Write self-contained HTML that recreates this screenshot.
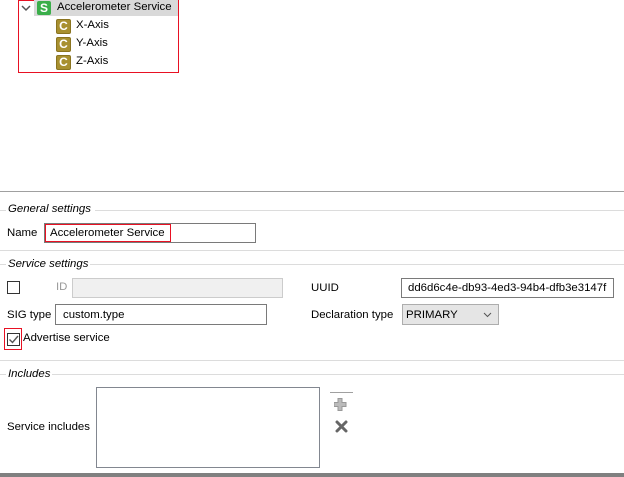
<!DOCTYPE html>
<html><head><style>
body{margin:0;width:624px;height:477px;background:#fff;position:relative;overflow:hidden;font-family:"Liberation Sans",sans-serif;font-size:11.4px;color:#000}
.a{position:absolute;white-space:nowrap}
.ln{position:absolute;height:1px;background:#dcdcdc}
.in{position:absolute;border:1px solid #7a7a7a;background:#fff;box-sizing:border-box;padding:2px 0 0 7px;font-size:11.4px;line-height:14px;white-space:nowrap}
.ic{position:absolute;width:14px;height:14px;border-radius:2px;color:#fff;font-weight:bold;font-size:12px;line-height:14px;text-align:center}
i{font-style:italic}
</style></head><body>
<div class="a" style="left:18px;top:0;width:159px;height:71px;border:1px solid #e81123"></div>
<div class="a" style="left:34px;top:0;width:144px;height:16px;background:#d9d9d9"></div>
<svg class="a" style="left:21px;top:4px" width="10" height="8"><path d="M1 2 L5 6 L9 2" stroke="#555" stroke-width="1.5" fill="none"/></svg>
<div class="ic" style="left:37px;top:1px;background:#3aae4a">S</div>
<div class="a" style="left:57px;top:1px">Accelerometer Service</div>
<div class="ic" style="left:56px;top:19px;background:#a89030;border:1px solid #8a7420;width:13px;height:13px;line-height:13px">C</div>
<div class="a" style="left:76px;top:19px">X-Axis</div>
<div class="ic" style="left:56px;top:37px;background:#a89030;border:1px solid #8a7420;width:13px;height:13px;line-height:13px">C</div>
<div class="a" style="left:76px;top:37px">Y-Axis</div>
<div class="ic" style="left:56px;top:55px;background:#a89030;border:1px solid #8a7420;width:13px;height:13px;line-height:13px">C</div>
<div class="a" style="left:76px;top:55px">Z-Axis</div>

<div class="a" style="left:0;top:191px;width:624px;height:1px;background:#a0a0a0"></div>
<div class="ln" style="left:0;top:210px;width:6px"></div>
<div class="a" style="left:8px;top:203px"><i>General settings</i></div>
<div class="ln" style="left:95px;top:210px;width:529px"></div>
<div class="a" style="left:7px;top:227px">Name</div>
<div class="in" style="left:44px;top:223px;width:212px;height:20px"></div>
<div class="a" style="left:45px;top:224px;width:126px;height:18px;border:1px solid #e81123;box-sizing:border-box"></div>
<div class="a" style="left:50px;top:227px">Accelerometer Service</div>

<div class="ln" style="left:0;top:250px;width:624px"></div>
<div class="ln" style="left:0;top:264px;width:6px"></div>
<div class="a" style="left:8px;top:258px"><i>Service settings</i></div>
<div class="ln" style="left:90px;top:264px;width:534px"></div>
<div class="a" style="left:7px;top:281px;width:13px;height:13px;border:1px solid #333;box-sizing:border-box"></div>
<div class="a" style="left:56px;top:281px;color:#999">ID</div>
<div class="in" style="left:72px;top:278px;width:211px;height:20px;background:#f0f0f0;border-color:#ccc"></div>
<div class="a" style="left:311px;top:282px">UUID</div>
<div class="in" style="left:401px;top:278px;width:213px;height:20px;overflow:hidden;padding-left:6px">dd6d6c4e-db93-4ed3-94b4-dfb3e3147f</div>
<div class="a" style="left:7px;top:309px">SIG type</div>
<div class="in" style="left:55px;top:304px;width:212px;height:21px;padding-top:3px">custom.type</div>
<div class="a" style="left:311px;top:309px">Declaration type</div>
<div class="in" style="left:402px;top:304px;width:97px;height:21px;background:#e5e5e5;border-color:#adadad;padding:3px 0 0 3px">PRIMARY</div>
<svg class="a" style="left:483px;top:312px" width="9" height="6"><path d="M1 1 L4.5 4.5 L8 1" stroke="#555" fill="none"/></svg>
<div class="a" style="left:4px;top:328px;width:18px;height:22px;border:1px solid #e81123;box-sizing:border-box"></div>
<div class="a" style="left:7px;top:333px;width:13px;height:13px;border:1px solid #333;box-sizing:border-box"></div>
<svg class="a" style="left:8px;top:334px" width="11" height="11"><path d="M1.5 5.5 L4.5 8.5 L10 2" stroke="#555" stroke-width="1.4" fill="none"/></svg>
<div class="a" style="left:23px;top:332px">Advertise service</div>

<div class="ln" style="left:0;top:360px;width:624px"></div>
<div class="ln" style="left:0;top:374px;width:6px"></div>
<div class="a" style="left:8px;top:368px"><i>Includes</i></div>
<div class="ln" style="left:52px;top:374px;width:572px"></div>
<div class="a" style="left:7px;top:421px">Service includes</div>
<div class="in" style="left:96px;top:387px;width:224px;height:81px;border-color:#828790"></div>
<div class="a" style="left:330px;top:392px;width:23px;height:1px;background:#a0a0a0"></div>
<svg class="a" style="left:334px;top:398px" width="13" height="13"><path d="M4 0.5h4v4h4v4h-4v4h-4v-4h-4v-4h4z" fill="#bbb" stroke="#999"/></svg>
<svg class="a" style="left:335px;top:420px" width="13" height="13"><path d="M2 2 L11 11 M11 2 L2 11" stroke="#666" stroke-width="3" stroke-linecap="round"/></svg>
<div class="a" style="left:0;top:473px;width:624px;height:4px;background:#808080"></div>
</body></html>
